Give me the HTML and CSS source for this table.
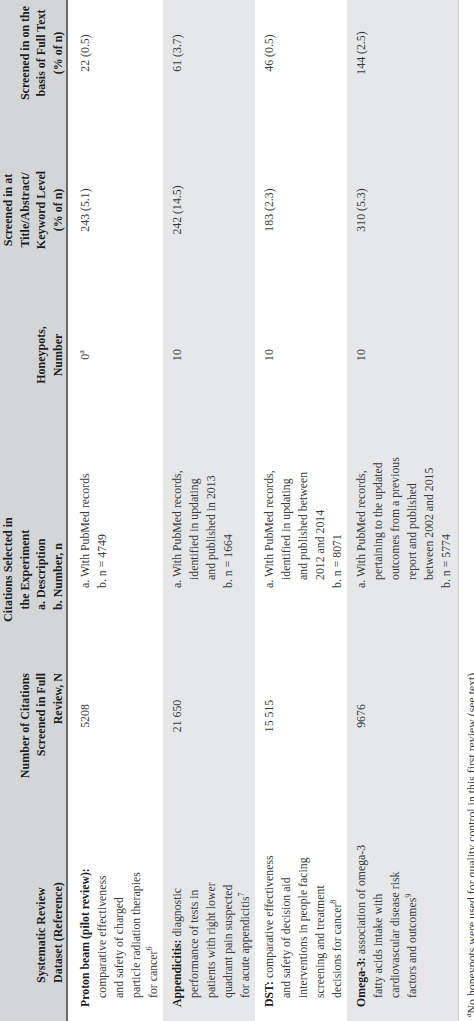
FILE: index.html
```html
<!DOCTYPE html>
<html lang="en">
<head>
<meta charset="utf-8">
<title>Systematic review datasets</title>
<link rel="stylesheet" href="styles.css">
</head>
<body>
<div class="frame">
<div class="page">
  <table class="tbl">
    <colgroup>
      <col class="c1"><col class="c2"><col class="c3"><col class="c4"><col class="c5"><col class="c6">
    </colgroup>
    <thead>
      <tr>
        <th class="h1">Systematic Review<br>Dataset (Reference)</th>
        <th class="h2">Number of Citations<br>Screened in Full<br>Review, N</th>
        <th class="h3"><div class="h3box"><div class="h3top">Citations Selected in<br>the Experiment</div><div class="h3sub">a. Description<br>b. Number, n</div></div></th>
        <th class="hc">Honeypots,<br>Number</th>
        <th class="hc">Screened in at<br>Title/Abstract/<br>Keyword Level<br>(% of n)</th>
        <th class="hc">Screened in on the<br>basis of Full Text<br>(% of n)</th>
      </tr>
    </thead>
    <tbody>
      <tr class="r first">
        <td class="d1"><p class="hang"><b>Proton beam (pilot review):</b><br>comparative effectiveness<br>and safety of charged<br>particle radiation therapies<br>for cancer<sup>6</sup></p></td>
        <td class="d2">5208</td>
        <td class="d3"><p class="hang3">a. With PubMed records</p><p class="plain">b. n = 4749</p></td>
        <td class="dc">0<sup>a</sup></td>
        <td class="dc">243 (5.1)</td>
        <td class="dc">22 (0.5)</td>
      </tr>
      <tr class="r alt">
        <td class="d1"><p class="hang"><b>Appendicitis:</b> diagnostic<br>performance of tests in<br>patients with right lower<br>quadrant pain suspected<br>for acute appendicitis<sup>7</sup></p></td>
        <td class="d2">21 650</td>
        <td class="d3"><p class="hang3">a. With PubMed records,<br>identified in updating<br>and published in 2013</p><p class="plain">b. n = 1664</p></td>
        <td class="dc">10</td>
        <td class="dc">242 (14.5)</td>
        <td class="dc">61 (3.7)</td>
      </tr>
      <tr class="r">
        <td class="d1"><p class="hang"><b>DST:</b> comparative effectiveness<br>and safety of decision aid<br>interventions in people facing<br>screening and treatment<br>decisions for cancer<sup>8</sup></p></td>
        <td class="d2">15 515</td>
        <td class="d3"><p class="hang3">a. With PubMed records,<br>identified in updating<br>and published between<br>2012 and 2014</p><p class="plain">b. n = 8071</p></td>
        <td class="dc">10</td>
        <td class="dc">183 (2.3)</td>
        <td class="dc">46 (0.5)</td>
      </tr>
      <tr class="r alt last">
        <td class="d1"><p class="hang"><b>Omega-3:</b> association of omega-3<br>fatty acids intake with<br>cardiovascular disease risk<br>factors and outcomes<sup>9</sup></p></td>
        <td class="d2">9676</td>
        <td class="d3"><p class="hang3">a. With PubMed records,<br>pertaining to the updated<br>outcomes from a previous<br>report and published<br>between 2002 and 2015</p><p class="plain">b. n = 5774</p></td>
        <td class="dc">10</td>
        <td class="dc">310 (5.3)</td>
        <td class="dc">144 (2.5)</td>
      </tr>
    </tbody>
  </table>
  <p class="foot"><sup>a</sup>No honeypots were used for quality control in this first review (see text).</p>
</div>
</div>
</body>
</html>
```

FILE: styles.css
```css
html, body {
  margin: 0;
  padding: 0;
  background: #ffffff;
}

.frame {
  width: 474px;
  height: 1021px;
  overflow: hidden;
}

.page {
  width: 1021px;
  height: 474px;
  overflow: hidden;
  background: #ffffff;
  transform-origin: 0 0;
  transform: translateY(1021px) rotate(-90deg);
  font-family: "Liberation Serif", "Times New Roman", serif;
  color: #3a3a3a;
}

.tbl {
  width: 1034px;
  table-layout: fixed;
  border-collapse: collapse;
  border-spacing: 0;
}

.c1 { width: 178px; }
.c2 { width: 194px; }
.c3 { width: 240px; }
.c4 { width: 108px; }
.c5 { width: 182px; }
.c6 { width: 132px; }

thead th {
  background: #d4d5d6;
  color: #1e1e1e;
  font-weight: bold;
  font-size: 12px;
  line-height: 16.5px;
  height: 66px;
  padding: 0;
  vertical-align: bottom;
  white-space: nowrap;
  border-bottom: 2px solid #6a6a6a;
}

.h1 { text-align: left; padding-left: 38px; }
.h2 { text-align: right; padding-right: 24px; }
.h3 { text-align: left; padding-left: 27px; }
.hc { text-align: center; }

.h3box { display: inline-block; }
.h3top { text-align: center; }
.h3sub { text-align: left; padding-left: 12px; }

tbody td {
  font-size: 11.8px;
  line-height: 17px;
  vertical-align: top;
  white-space: nowrap;
  padding: 6px 0 1px 0;
}

.r.first td { padding-top: 9px; }
.r.last td { padding-bottom: 3px; }
.r.alt td { background: #e6e7e8; }
.r.last td { border-bottom: 1px solid #d2d3d4; }

.d1 { padding-left: 14px; }
.d2 { text-align: center; padding-left: 60px; }
.d3 { padding-left: 61px; }
.dc { text-align: center; }

.hang, .hang3, .plain {
  margin: 0;
}

.hang {
  padding-left: 9px;
  text-indent: -9px;
}

.hang3 {
  padding-left: 8px;
  text-indent: -8px;
}

b {
  color: #1a1a1a;
}

sup {
  font-size: 8px;
  line-height: 0;
  vertical-align: 5px;
}

.foot {
  margin: 0;
  padding: 5px 0 0 4px;
  font-size: 11.8px;
  line-height: 17px;
  white-space: nowrap;
  color: #3a3a3a;
}
```
